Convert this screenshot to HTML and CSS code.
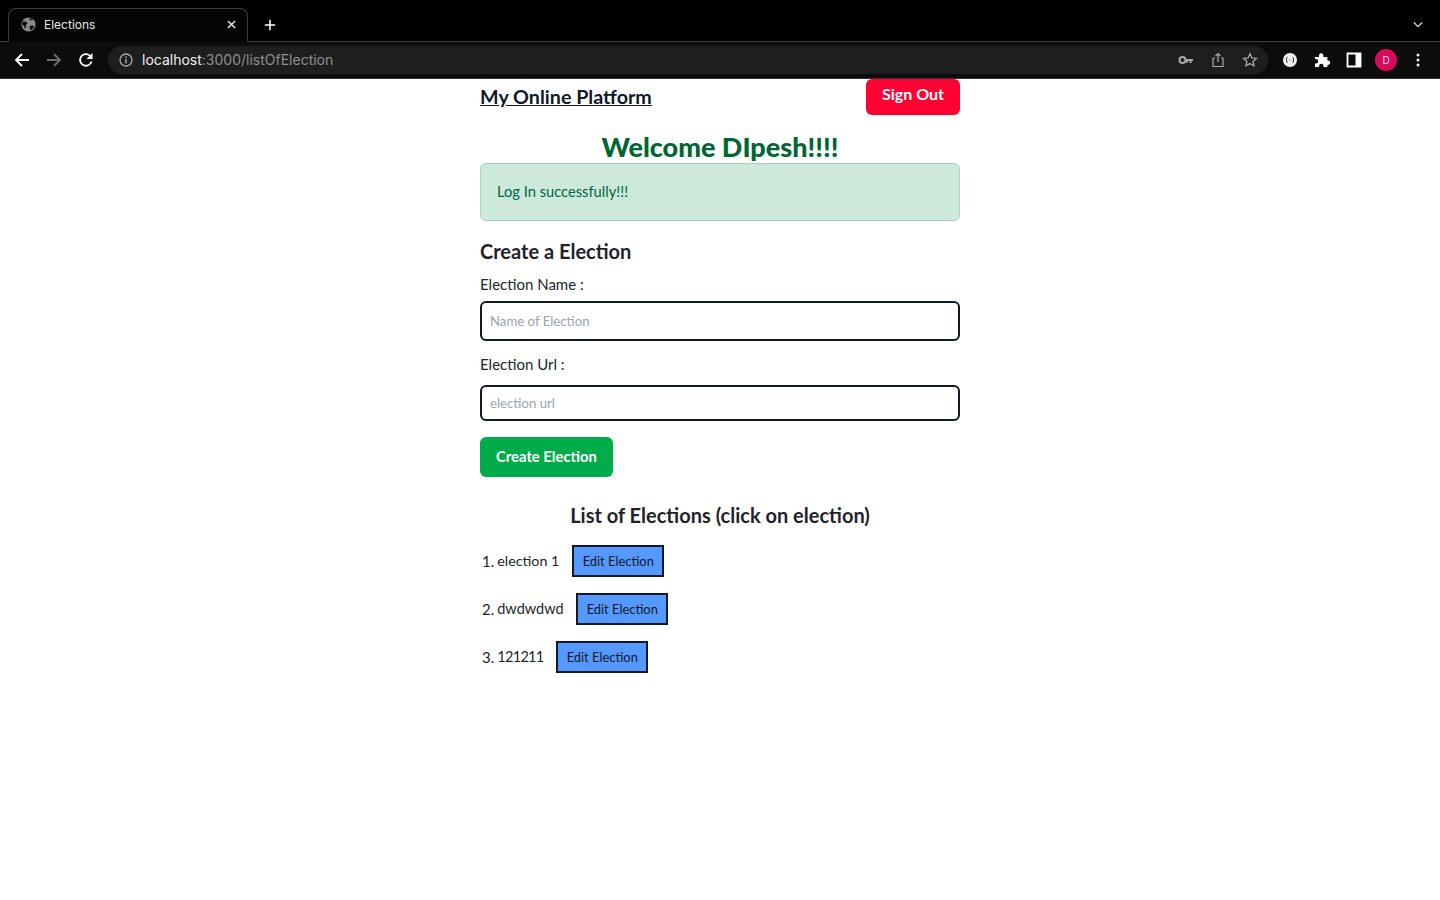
FILE: index.html
```html
<!DOCTYPE html>
<html lang="en">
<head>
<meta charset="utf-8">
<title>Elections</title>
<link rel="stylesheet" href="styles.css">
</head>
<body>
<header class="chrome">
  <div class="tabstrip">
    <div class="tab">
      <svg class="favicon" viewBox="0 0 16 16"><circle cx="8" cy="8" r="7.500" fill="#8a8a8a"/><path d="M2 4.500l3.500.5 1.500 2-2 1.500.5 2.500-1.500 1.500-.5-3L1 8zM9 9.500l3.500-.5 1.500 1-2 3-2 1zM8 1.500l2.500 2 2.500-.5-2-1.500z" fill="#0a0a0a"/></svg>
      <span class="tab-title">Elections</span>
      <svg class="tab-close" viewBox="0 0 10 10"><path d="M1 1l8 8M9 1l-8 8" stroke="#e8e8e8" stroke-width="1.600"/></svg>
    </div>
    <svg class="newtab" viewBox="0 0 14 14"><path d="M7 1v12M1 7h12" stroke="#fff" stroke-width="1.800"/></svg>
    <svg class="tabmenu" viewBox="0 0 12 8"><path d="M1 1.500l5 5 5-5" fill="none" stroke="#e8e8e8" stroke-width="1.500"/></svg>
  </div>
  <div class="toolbar">
    <svg class="navicon" viewBox="0 0 16 16"><path d="M15 8H2M8 2L2 8l6 6" fill="none" stroke="#fff" stroke-width="1.800"/></svg>
    <svg class="navicon" viewBox="0 0 16 16"><path d="M1 8h13M8 2l6 6-6 6" fill="none" stroke="#6e6e6e" stroke-width="1.800"/></svg>
    <svg class="navicon" viewBox="0 0 16 16"><path d="M13.500 9.500A5.800 5.800 0 1 1 12 3.800" fill="none" stroke="#fff" stroke-width="1.800"/><path d="M14.500 1v6h-6z" fill="#fff"/></svg>
    <div class="omnibox">
      <svg class="info" viewBox="0 0 14 14"><circle cx="7" cy="7" r="6" fill="none" stroke="#a8a8a8" stroke-width="1.300"/><path d="M7 6v4.500M7 3.500v1.400" stroke="#a8a8a8" stroke-width="1.400"/></svg>
      <div class="url"><span class="host">localhost</span>:3000/listOfElection</div>
      <svg class="omni-icon" viewBox="0 0 16 16"><circle cx="4.500" cy="8" r="3" fill="none" stroke="#a8a8a8" stroke-width="2"/><path d="M7 7h8v2h-1.500v2h-2V9H10v1.500H8V9H7z" fill="#a8a8a8"/></svg>
      <svg class="omni-icon" viewBox="0 0 16 16"><path d="M5 6H3v8.500h10V6h-2" fill="none" stroke="#a8a8a8" stroke-width="1.200"/><path d="M8 10V1.500M5.500 4L8 1.500 10.500 4" fill="none" stroke="#a8a8a8" stroke-width="1.200"/></svg>
      <svg class="omni-icon" viewBox="0 0 16 16"><path d="M8 1.800l1.900 4.100 4.500.5-3.300 3 .9 4.400L8 11.600l-4 2.200.9-4.400-3.300-3 4.500-.5z" fill="none" stroke="#a8a8a8" stroke-width="1.300"/></svg>
    </div>
    <div class="extensions">
      <svg class="ext-icon" viewBox="0 0 16 16"><circle cx="8" cy="8" r="7" fill="#f0f0f0"/><path d="M5.500 5Q4 5 4.500 8T5.500 11M10.500 5Q12 5 11.500 8T10.500 11" fill="none" stroke="#333" stroke-width="1"/><path d="M7 8h.5M8.800 8h.5" stroke="#333" stroke-width="1"/></svg>
      <svg class="ext-icon" viewBox="0 0 16 16"><path d="M1 5h4V3.500a2.200 2.200 0 0 1 4.400 0V5h4v3.500h.5a2.200 2.200 0 0 1 0 4.400h-.5V15H9.500v-1a2.200 2.200 0 0 0-4.400 0v1H1v-3.500h1a2.200 2.200 0 0 0 0-4.400H1z" fill="#fff"/></svg>
      <svg class="ext-icon" viewBox="0 0 16 16"><path d="M1.500 1.500h13v13h-13z" fill="none" stroke="#fff" stroke-width="1.800"/><path d="M9.500 2h5v12h-5z" fill="#fff"/></svg>
      <div class="avatar">D</div>
      <svg class="ext-icon" viewBox="0 0 16 16"><circle cx="8" cy="3" r="1.500" fill="#f0f0f0"/><circle cx="8" cy="8" r="1.500" fill="#f0f0f0"/><circle cx="8" cy="13" r="1.500" fill="#f0f0f0"/></svg>
    </div>
  </div>
</header>
<main class="page">
  <nav class="topbar">
    <a class="brand" href="#">My Online Platform</a>
    <a class="signout" href="#">Sign Out</a>
  </nav>
  <h1 class="welcome">Welcome DIpesh!!!!</h1>
  <div class="alert">Log In successfully!!!</div>
  <h2 class="form-title">Create a Election</h2>
  <form class="form">
    <label class="label label-name" for="name">Election Name :</label>
    <input class="input input-name" id="name" placeholder="Name of Election">
    <label class="label label-url" for="url">Election Url :</label>
    <input class="input input-url" id="url" placeholder="election url">
    <button class="create" type="button">Create Election</button>
  </form>
  <h2 class="list-title">List of Elections (click on election)</h2>
  <ol class="list">
    <li class="row"><span class="num">1.</span><span class="item-name name-one">election 1</span><a class="edit" href="#">Edit Election</a></li>
    <li class="row"><span class="num">2.</span><span class="item-name name-two">dwdwdwd</span><a class="edit" href="#">Edit Election</a></li>
    <li class="row"><span class="num">3.</span><span class="item-name name-three">121211</span><a class="edit" href="#">Edit Election</a></li>
  </ol>
</main>
</body>
</html>
```
FILE: styles.css
```css
* { box-sizing: border-box; }
html, body { margin: 0; padding: 0; background: #fff; }
body { font-family: Lato, "Open Sans", sans-serif; color: #111827; }

.chrome { height: 79px; background: #000; font-family: Inter, sans-serif; }
.tabstrip { height: 42px; display: flex; align-items: flex-end; padding-left: 8px; padding-right: 17px; border-bottom: 1px solid #3c3c3c; }
.tab { width: 240px; height: 34px; margin-bottom: -1px; background: #050505; border: 1px solid #3c3c3c; border-bottom-color: #050505; border-radius: 8px 8px 0 0; display: flex; align-items: center; padding: 0 11px 2px 12px; }
.favicon { width: 15px; height: 15px; flex: none; }
.tab-title { margin-left: 8px; font-size: 12px; color: #e8e8e8; flex: 1; }
.tab-close { width: 9px; height: 9px; flex: none; }
.newtab { width: 12px; height: 12px; margin: 0 0 10px 16px; flex: none; }
.tabmenu { width: 10px; height: 7px; margin: 0 0 13px auto; flex: none; }

.toolbar { height: 37px; background: #0c0c0c; border-bottom: 1px solid #333; display: flex; align-items: center; padding: 0 14px 1px 14px; }
.navicon { width: 16px; height: 16px; flex: none; margin-right: 16px; }
.omnibox { width: 1160px; margin-left: -2px; height: 28px; border-radius: 14px; background: #1e1e1e; display: flex; align-items: center; padding: 0 10px 0 11px; flex: none; }
.info { width: 14px; height: 14px; flex: none; }
.url { margin-left: 9px; font-size: 14px; letter-spacing: 0; color: #8e8e8e; flex: 1; }
.host { color: #f0f0f0; }
.omni-icon { width: 16px; height: 16px; flex: none; margin-left: 16px; }
.extensions { display: flex; align-items: center; gap: 16px; margin-left: 14px; }
.ext-icon { width: 16px; height: 16px; flex: none; }
.avatar { width: 22px; height: 22px; margin: 0 -3px; border-radius: 50%; background: #d80a5b; color: #f6d7e4; font-size: 10px; display: flex; align-items: center; justify-content: center; }

.page { width: 480px; margin: 0 auto; }
.topbar { display: flex; justify-content: space-between; align-items: flex-start; height: 36px; }
.brand { font-size: 19.700px; font-weight: 700; color: #111827; text-decoration: underline; margin-top: 4px; line-height: 28px; }
.signout { width: 94px; height: 36px; background: #ff0033; border-radius: 6px; color: #fff; font-size: 16px; font-weight: 700; text-decoration: none; text-align: center; line-height: 30px; }
.welcome { margin: 16px 0 0; height: 32px; font-size: 27px; line-height: 31px; font-weight: 900; color: #006633; text-align: center; }
.alert { height: 58px; border: 1px solid #a3d5bf; border-radius: 6px; background: #cde9dc; color: #006644; font-size: 14.700px; padding: 0 16px 2px; display: flex; align-items: center; }
.form-title { margin: 16px 0 0; font-size: 20px; line-height: 28px; font-weight: 700; color: #1f2329; }
.form { display: flex; flex-direction: column; align-items: flex-start; }
.label { font-size: 15px; line-height: 24px; color: #212529; }
.label-name { margin-top: 7px; height: 25px; }
.label-url { margin-top: 11px; height: 25px; }
.input { width: 480px; border: 2px solid #111827; border-radius: 6px; padding: 0 8px; font: 13.200px Lato, sans-serif; background: #fff; }
.input::placeholder { color: #9ca3af; opacity: 1; }
.input-name { height: 40px; margin-top: 4px; }
.input-url { height: 36px; margin-top: 8px; }
.create { margin-top: 16px; width: 133px; height: 40px; border: 0; border-radius: 6px; background: #00ac4a; color: #fff; padding: 0 0 2px; font: 700 14.800px Lato, sans-serif; }
.list-title { margin: 24px 0 0; font-size: 20px; line-height: 28px; font-weight: 700; color: #1f2329; text-align: center; }
.list { list-style: none; margin: 16px 0 0; padding: 0; display: flex; flex-direction: column; gap: 16px; }
.row { display: flex; align-items: center; height: 32px; font-size: 15px; color: #212529; padding-left: 2px; }
.num { margin-right: 3px; line-height: 32px; height: 32px; }
.item-name { line-height: 32px; height: 32px; }
.name-one { width: 75px; font-size: 14.300px; }
.name-two { width: 79px; font-size: 14.500px; }
.name-three { width: 59px; font-size: 14.500px; letter-spacing: -.7px; }
.edit { height: 32px; width: 92px; border: 2px solid #111827; background: #5599ff; color: #111827; font-size: 12.900px; line-height: 28px; text-align: center; text-decoration: none; flex: none; }
```
